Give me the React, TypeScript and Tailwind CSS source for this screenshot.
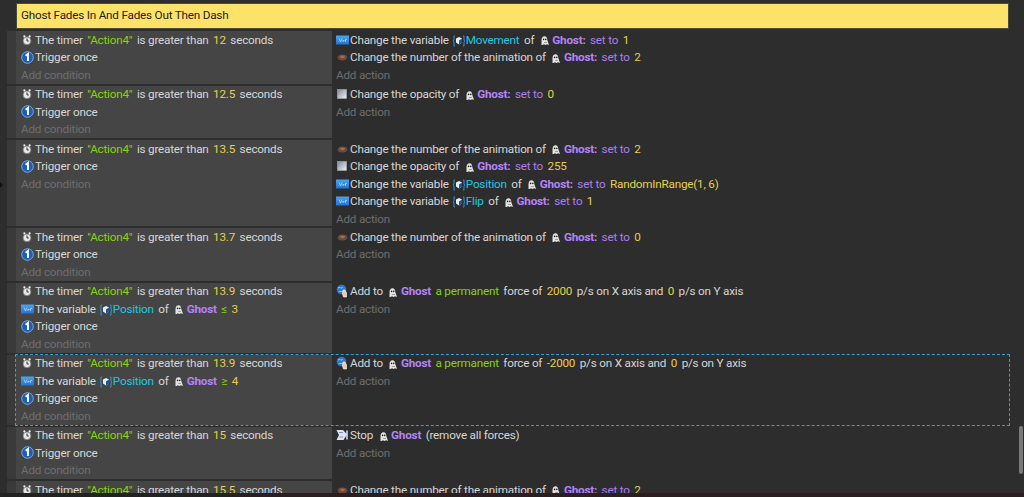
import React from 'react'

type Kind = 'n' | 'g' | 'y' | 'c' | 'o' | 's'
type Seg = { t: string; k?: Kind }
type Line = { icon: string; segs: Seg[] }
type Row = { conds: Line[]; actions: Line[]; selected?: boolean }

const kindClass: Record<Kind, string> = {
  n: 'text-[#d6d6d6]',
  g: 'text-[#86d40b]',
  y: 'text-[#e6d048]',
  c: 'text-[#1fc8e0]',
  o: 'text-[#b583f7] font-bold',
  s: 'text-[#ab7df0]',
}

const TimerIcon = () => (
  <svg width="12" height="12" viewBox="0 0 12 12" className="shrink-0">
    <circle cx="6" cy="6.8" r="3.9" fill="#e8e8e8" stroke="#777" strokeWidth="0.8" />
    <path d="M6 4.4V7H7.8" stroke="#333" strokeWidth="1" fill="none" />
    <circle cx="3.4" cy="2.4" r="1.1" fill="#f2f2f2" />
    <circle cx="8.6" cy="2.4" r="1.1" fill="#f2f2f2" />
  </svg>
)

const OnceIcon = () => (
  <svg width="13" height="13" viewBox="0 0 13 13" className="shrink-0">
    <circle cx="6.5" cy="6.5" r="5.8" fill="#1d5fb8" stroke="#7fb2ea" strokeWidth="0.9" />
    <path d="M4.6 4.8L7 3V10" stroke="#fff" strokeWidth="1.9" fill="none" />
  </svg>
)

const VarIcon = () => (
  <svg width="13" height="12" viewBox="0 0 13 12" className="shrink-0">
    <defs>
      <linearGradient id="varFill" x1="0" y1="0" x2="0" y2="1">
        <stop offset="0" stopColor="#4aa3f0" />
        <stop offset="1" stopColor="#2374d0" />
      </linearGradient>
    </defs>
    <rect x="0" y="1.5" width="13" height="9" fill="url(#varFill)" />
    <path d="M3 4.5L4.5 8L6 4.5M7 8V6M7 6.5H8.5M9.5 8V5.5H11" stroke="#bfe0fb" strokeWidth="0.7" fill="none" />
  </svg>
)

const AnimIcon = () => (
  <svg width="13" height="12" viewBox="0 0 13 12" className="shrink-0">
    <ellipse cx="6.5" cy="6.5" rx="4.8" ry="3" fill="#6f4a3c" />
    <ellipse cx="6.5" cy="5.8" rx="2.4" ry="1.4" fill="#9a6f5c" />
  </svg>
)

const OpacityIcon = () => (
  <svg width="13" height="12" viewBox="0 0 13 12" className="shrink-0">
    <defs>
      <linearGradient id="opFill" x1="0" y1="0" x2="1" y2="1">
        <stop offset="0" stopColor="#7d8794" />
        <stop offset="1" stopColor="#f2f4f8" />
      </linearGradient>
    </defs>
    <rect x="1.5" y="1.5" width="9" height="9" fill="url(#opFill)" stroke="#a8adb4" strokeWidth="0.6" />
  </svg>
)

const ForceIcon = () => (
  <svg width="14" height="14" viewBox="0 0 14 14" className="shrink-0">
    <circle cx="5.5" cy="5.5" r="4.8" fill="#2f78c8" />
    <path d="M2 4C4 2.5 5 5 7 3.5M2.5 8C4 6.5 6 8.5 8 7" stroke="#a6d0f2" strokeWidth="0.9" fill="none" />
    <path d="M7 6H9L10.5 9V13H7.5L6.5 10Z" fill="#f4c9a4" stroke="#fff" strokeWidth="0.6" />
  </svg>
)

const StopIcon = () => (
  <svg width="14" height="12" viewBox="0 0 14 12" className="shrink-0">
    <path d="M0.5 1H7L11 5.5L7.5 11H0.5L3 6Z" fill="#dfe6f2" />
    <path d="M3 3.5H7M3.5 8H7" stroke="#6d88b8" strokeWidth="0.9" />
    <path d="M11 1.5V10.5" stroke="#f2f2f2" strokeWidth="1.4" />
  </svg>
)

const icons: Record<string, React.ReactNode> = {
  timer: <TimerIcon />,
  once: <OnceIcon />,
  variable: <VarIcon />,
  anim: <AnimIcon />,
  opacity: <OpacityIcon />,
  force: <ForceIcon />,
  stop: <StopIcon />,
}

const GhostIcon = () => (
  <svg width="11" height="11" viewBox="0 0 11 11" className="mr-[-2px] shrink-0">
    <path d="M2.5 10V5C2.5 2.8 3.8 1.2 5.5 1.2S8.3 2.8 8.3 5L10 10L8 9.2L6.5 10L5 9.2L3.5 10Z" fill="#e4e4e4" />
    <circle cx="4.6" cy="4.4" r="0.8" fill="#222" />
    <circle cx="6.8" cy="4.4" r="0.8" fill="#222" />
    <path d="M5 7.5H8" stroke="#8a8a8a" strokeWidth="0.8" />
  </svg>
)

const CubeIcon = () => (
  <svg width="12" height="12" viewBox="0 0 12 12" className="mr-[-4px] shrink-0">
    <path d="M2 1H1V5L0.3 6L1 7V11H2M10 1H11V5L11.7 6L11 7V11H10" stroke="#2aa6d8" strokeWidth="0.9" fill="none" />
    <path d="M6 2L9 3.5V7.5L6 9.5L3 7.5V3.5Z" fill="#e8eef6" />
    <path d="M6 5.5L9 3.5V7.5L6 9.5Z" fill="#1f4f9a" />
  </svg>
)

// tokens: "@" = ghost icon before the object name, "#" = variable bracket icon
const G: Seg = { t: '@' }
const V: Seg = { t: '#' }

const timer = (secs: string): Line => ({
  icon: 'timer',
  segs: [
    { t: 'The timer' },
    { t: '"Action4"', k: 'g' },
    { t: 'is greater than' },
    { t: secs, k: 'y' },
    { t: 'seconds' },
  ],
})
const once: Line = { icon: 'once', segs: [{ t: 'Trigger once' }] }
const anim = (n: string): Line => ({
  icon: 'anim',
  segs: [{ t: 'Change the number of the animation of' }, G, { t: 'Ghost:', k: 'o' }, { t: 'set to', k: 's' }, { t: n, k: 'y' }],
})
const opacity = (n: string): Line => ({
  icon: 'opacity',
  segs: [{ t: 'Change the opacity of' }, G, { t: 'Ghost:', k: 'o' }, { t: 'set to', k: 's' }, { t: n, k: 'y' }],
})
const setVar = (name: string, val: string): Line => ({
  icon: 'variable',
  segs: [{ t: 'Change the variable' }, V, { t: name, k: 'c' }, { t: 'of' }, G, { t: 'Ghost:', k: 'o' }, { t: 'set to', k: 's' }, { t: val, k: 'y' }],
})
const testVar = (op: string, val: string): Line => ({
  icon: 'variable',
  segs: [{ t: 'The variable' }, V, { t: 'Position', k: 'c' }, { t: 'of' }, G, { t: 'Ghost', k: 'o' }, { t: op, k: 'g' }, { t: val, k: 'y' }],
})
const force = (x: string): Line => ({
  icon: 'force',
  segs: [
    { t: 'Add to' },
    G,
    { t: 'Ghost', k: 'o' },
    { t: 'a permanent', k: 'g' },
    { t: 'force of' },
    { t: x, k: 'y' },
    { t: 'p/s on X axis and' },
    { t: '0', k: 'y' },
    { t: 'p/s on Y axis' },
  ],
})

const rows: Row[] = [
  { conds: [timer('12'), once], actions: [setVar('Movement', '1'), anim('2')] },
  { conds: [timer('12.5'), once], actions: [opacity('0')] },
  {
    conds: [timer('13.5'), once],
    actions: [anim('2'), opacity('255'), setVar('Position', 'RandomInRange(1, 6)'), setVar('Flip', '1')],
  },
  { conds: [timer('13.7'), once], actions: [anim('0')] },
  { conds: [timer('13.9'), testVar('≤', '3'), once], actions: [force('2000')] },
  { conds: [timer('13.9'), testVar('≥', '4'), once], actions: [force('-2000')], selected: true },
  {
    conds: [timer('15'), once],
    actions: [{ icon: 'stop', segs: [{ t: 'Stop' }, G, { t: 'Ghost', k: 'o' }, { t: '(remove all forces)' }] }],
  },
  { conds: [timer('15.5'), once], actions: [anim('2')] },
]

function SentenceLine({ line }: { line: Line }) {
  return (
    <div className="flex h-[17.5px] items-center whitespace-nowrap">
      <span className="flex w-[14px] shrink-0 items-center">{icons[line.icon]}</span>
      <span className="flex items-center gap-[4.5px] pt-[2px]">
        {line.segs.map((s, i) => {
          if (s.t === '@') return <GhostIcon key={i} />
          if (s.t === '#') return <CubeIcon key={i} />
          return (
            <span key={i} className={kindClass[s.k ?? 'n']}>
              {s.t}
            </span>
          )
        })}
      </span>
    </div>
  )
}

function EventRow({ row }: { row: Row }) {
  return (
    <div className="relative flex">
      <div className="w-[9px] shrink-0 border-b-2 border-[#2d2d2d] bg-[#3a3a3a]" />
      <div className="w-[316px] shrink-0 border-b-2 border-[#2d2d2d] bg-[#454545] pl-[5px]">
        {row.conds.map((l, i) => (
          <SentenceLine key={i} line={l} />
        ))}
        <div className="flex h-[17.5px] items-center pt-[2px] text-[#6e6e6e]">Add condition</div>
      </div>
      <div className="flex-1 pb-[0.5px] pl-[4px]">
        {row.actions.map((l, i) => (
          <SentenceLine key={i} line={l} />
        ))}
        <div className="flex h-[17.5px] items-center pt-[2px] text-[#6e6e6e]">Add action</div>
      </div>
      {row.selected && (
        <div className="absolute -top-[1px] bottom-[1px] left-[8px] w-[995px] border border-dashed border-[#2aa3e0]" />
      )}
    </div>
  )
}

export default function App() {
  return (
    <div className="relative h-[497px] w-[1024px] overflow-hidden bg-[#2d2d2d] pl-[7px] pt-[3px] font-['Roboto','Open_Sans',sans-serif] text-[11.7px] tracking-[-0.2px]">
      <div className="ml-[9px] flex h-[26px] w-[993px] items-center border border-[#4a4a3a] bg-[#fde26a] pl-[4px] text-[#222]">
        Ghost Fades In And Fades Out Then Dash
      </div>
      <div className="pt-[2px]">
        {rows.map((r, i) => (
          <EventRow key={i} row={r} />
        ))}
      </div>
      {/* collapse arrow in the gutter */}
      <div className="absolute left-0 top-[182px] h-0 w-0 border-y-[3px] border-l-[3px] border-y-transparent border-l-[#111]" />
      {/* scrollbar thumb */}
      <div className="absolute left-[1019px] top-[426px] h-[48px] w-[4px] rounded-full bg-[#7a7a7a]" />
      {/* window edge at the bottom */}
      <div className="absolute bottom-0 left-0 flex h-[4px] w-full">
        <div className="w-[236px] bg-[#222222]" />
        <div className="flex-1 bg-[#2b1d20]" />
      </div>
    </div>
  )
}
